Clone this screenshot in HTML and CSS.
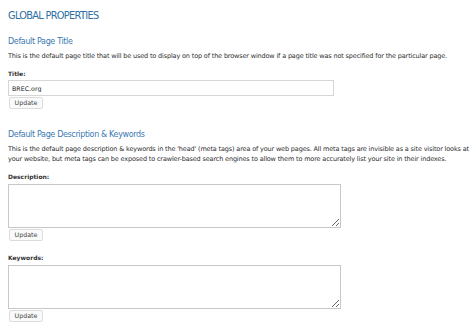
FILE: index.html
```html
<!DOCTYPE html>
<html>
<head>
<meta charset="utf-8">
<link rel="stylesheet" href="styles.css">
</head>
<body>
<div class="page">
  <h1 class="title">GLOBAL PROPERTIES</h1>

  <section class="group">
    <h2 class="subtitle">Default Page Title</h2>
    <p class="desc">This is the default page title that will be used to display on top of the browser window if a page title was not specified for the particular page.</p>
    <label class="label">Title:</label>
    <input class="text" type="text" value="BREC.org">
    <button class="btn">Update</button>
  </section>

  <section class="group group2">
    <h2 class="subtitle">Default Page Description &amp; Keywords</h2>
    <p class="desc">This is the default page description &amp; keywords in the 'head' (meta tags) area of your web pages. All meta tags are invisible as a site visitor looks at your website, but meta tags can be exposed to crawler-based search engines to allow them to more accurately list your site in their indexes.</p>
    <label class="label">Description:</label>
    <textarea class="area"></textarea>
    <button class="btn">Update</button>

    <label class="label label2">Keywords:</label>
    <textarea class="area"></textarea>
    <button class="btn">Update</button>
  </section>
</div>
</body>
</html>
```

FILE: styles.css
```css
html, body {
  margin: 0;
  padding: 0;
  background: #ffffff;
}
.page {
  padding: 10px 3px 0 8px;
  font-family: "DejaVu Sans", Verdana, sans-serif;
  color: #333333;
  display: flex;
  flex-direction: column;
}
.title {
  margin: 0;
  font-size: 9.8px;
  font-weight: normal;
  color: #2f6fa3;
  line-height: 12px;
  letter-spacing: -0.7px;
}
.group {
  display: flex;
  flex-direction: column;
  align-items: flex-start;
  margin-top: 15px;
}
.group2 {
  margin-top: 21px;
}
.subtitle {
  margin: 0;
  font-size: 8px;
  font-weight: normal;
  color: #3a79b2;
  line-height: 10px;
  letter-spacing: -0.35px;
}
.desc {
  margin: 4px 0 0 0;
  font-size: 6.5px;
  line-height: 10px;
  color: #2e2e2e;
  letter-spacing: -0.15px;
}
.label {
  margin-top: 9px;
  font-size: 6px;
  font-weight: bold;
  line-height: 8px;
  color: #333;
}
.label2 {
  margin-top: 13px;
}
.text {
  margin: 2px 0 0 0;
  box-sizing: border-box;
  width: 326px;
  height: 16px;
  border: 1px solid #d6d6d6;
  padding: 0 3px;
  font-family: "DejaVu Sans", Verdana, sans-serif;
  font-size: 6.3px;
  color: #222;
  outline: none;
}
.area {
  margin: 3px 0 0 0;
  box-sizing: border-box;
  width: 333px;
  height: 44px;
  border: 1px solid #c8c8c8;
  resize: vertical;
  font-size: 6px;
}
.btn {
  margin: 1px 0 0 1px;
  box-sizing: border-box;
  width: 34px;
  height: 12px;
  padding: 0;
  border: 1px solid #dcdcdc;
  border-radius: 2px;
  background: #fafafa;
  font-family: "DejaVu Sans", Verdana, sans-serif;
  font-size: 6.3px;
  color: #444;
  line-height: 10px;
}
```
